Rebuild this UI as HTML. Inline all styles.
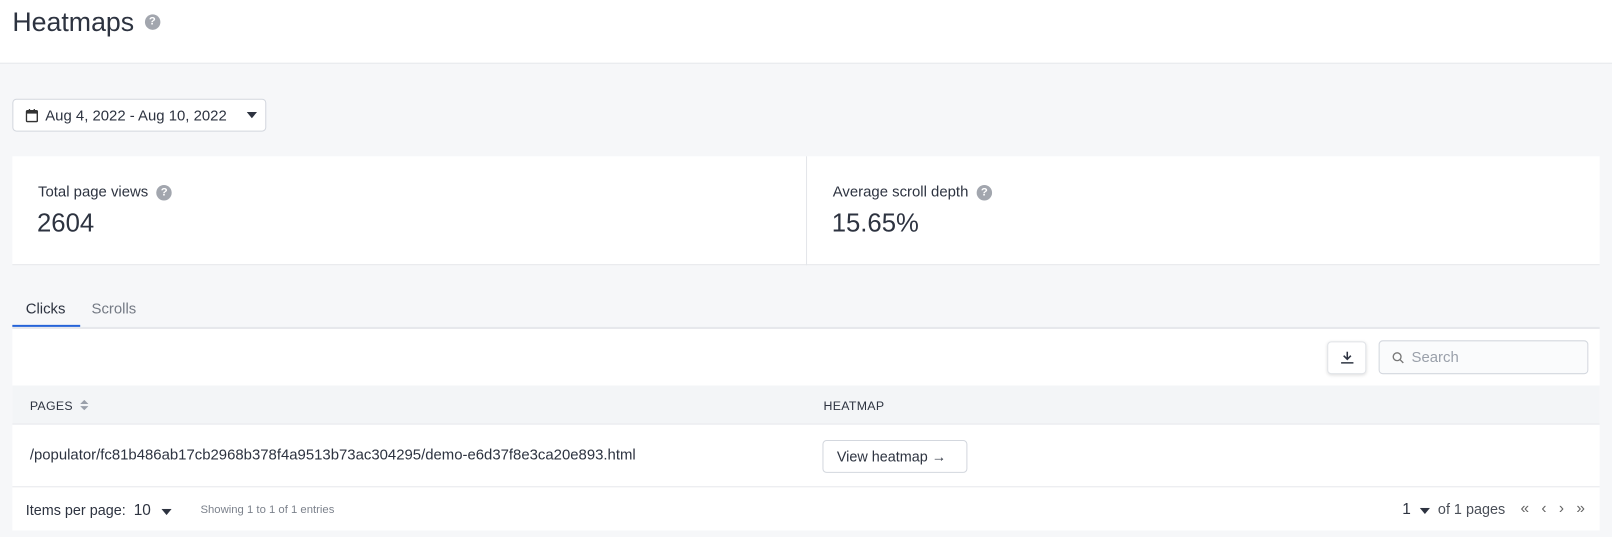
<!DOCTYPE html>
<html><head><style>
*{box-sizing:border-box;margin:0;padding:0}
body{width:1612px;height:536px;background:#f6f7f9;font-family:"Liberation Sans",sans-serif;color:#2d3340;position:relative;overflow:hidden}
#w{position:absolute;left:0;top:0;width:1568px;height:522px;transform:scale(1.02806);transform-origin:0 0}
.a{position:absolute}
.q{display:inline-block;width:15px;height:15px;border-radius:50%;background:#a2a6ae;color:#fff;font-size:11px;font-weight:bold;text-align:center;line-height:15px;vertical-align:middle}
</style></head><body><div id="w">
<div class="a" style="left:0;top:0;width:1568px;height:62px;background:#fff;border-bottom:1px solid #e4e6ea"></div>
<div class="a" style="left:12px;top:6px;font-size:26px;color:#2d3340">Heatmaps <span class="q" style="margin-left:3px;margin-top:-4px">?</span></div>
<div class="a" style="left:12px;top:96px;width:247px;height:32px;background:#fff;border:1px solid #d3d7de;border-radius:4px;font-size:14.5px;line-height:32px;padding-left:31px">
<svg class="a" style="left:12px;top:9px" width="12" height="13" viewBox="0 0 12 13"><rect x="0.7" y="1.7" width="10.6" height="10.6" rx="1" fill="none" stroke="#333" stroke-width="1.4"/><rect x="0.5" y="1.5" width="11" height="3" fill="#333"/><rect x="3" y="0" width="1.3" height="3" fill="#333"/><rect x="7.7" y="0" width="1.3" height="3" fill="#333"/></svg>
Aug 4, 2022 - Aug 10, 2022
<svg class="a" style="left:227px;top:12px" width="10" height="6"><path d="M0 0H10L5 6Z" fill="#2d3340"/></svg></div>
<div class="a" style="left:12px;top:152px;width:1544px;height:106px;background:#fff;border-bottom:1px solid #e4e6ea"></div>
<div class="a" style="left:784px;top:152px;width:1px;height:106px;background:#e4e6ea"></div>
<div class="a" style="left:37px;top:179px;font-size:14.5px">Total page views <span class="q" style="margin-left:4px">?</span></div>
<div class="a" style="left:36px;top:203px;font-size:25px">2604</div>
<div class="a" style="left:810px;top:179px;font-size:14.5px">Average scroll depth <span class="q" style="margin-left:4px">?</span></div>
<div class="a" style="left:809px;top:203px;font-size:25px">15.65%</div>
<div class="a" style="left:25px;top:293px;font-size:14.5px">Clicks</div>
<div class="a" style="left:89px;top:293px;font-size:14.5px;color:#747a84">Scrolls</div>
<div class="a" style="left:12px;top:316px;width:66px;height:2px;background:#2563d8"></div>
<div class="a" style="left:12px;top:318px;width:1544px;height:2px;background:#e6e8ec"></div>
<div class="a" style="left:12px;top:320px;width:1544px;height:196px;background:#fff"></div>
<div class="a" style="left:1291px;top:332px;width:38px;height:32px;border:1px solid #e1e4e8;border-radius:4px;box-shadow:0 1px 3px rgba(0,0,0,.12);background:#fff">
<svg class="a" style="left:12px;top:9px" width="13" height="12"><path d="M6.5 0V7M3 4L6.5 7.5L10 4M0.5 11H12.5" stroke="#2d3340" stroke-width="1.5" fill="none"/></svg></div>
<div class="a" style="left:1341px;top:331px;width:204px;height:33px;border:1px solid #d3d7de;border-radius:4px;background:#fafbfc;font-size:14.5px;color:#9aa0aa;line-height:33px;padding-left:31px">
<svg class="a" style="left:12px;top:10px" width="12" height="12"><circle cx="5" cy="5" r="3.8" stroke="#777" stroke-width="1.3" fill="none"/><path d="M8 8L11 11" stroke="#777" stroke-width="1.3"/></svg>Search</div>
<div class="a" style="left:12px;top:375px;width:1544px;height:38px;background:#f3f5f7;border-bottom:1px solid #e6e8ec"></div>
<div class="a" style="left:29px;top:388px;font-size:12px;letter-spacing:.3px">PAGES <svg width="8" height="10" style="margin-left:3px"><path d="M0 4L4 0L8 4ZM0 6L4 10L8 6Z" fill="#9aa0aa"/></svg></div>
<div class="a" style="left:801px;top:388px;font-size:12px;letter-spacing:.3px">HEATMAP</div>
<div class="a" style="left:29px;top:435px;font-size:14.5px">/populator/fc81b486ab17cb2968b378f4a9513b73ac304295/demo-e6d37f8e3ca20e893.html</div>
<div class="a" style="left:800px;top:428px;width:141px;height:32px;border:1px solid #d3d7de;border-radius:4px;font-size:14px;line-height:31px;padding-left:13px">View heatmap →</div>
<div class="a" style="left:12px;top:473px;width:1544px;height:1px;background:#e6e8ec"></div>
<div class="a" style="left:25px;top:488px;font-size:14px">Items per page: &nbsp;<span style="font-size:15px">10</span> <svg width="10" height="6" style="margin-left:6px"><path d="M0 0H10L5 6Z" fill="#2d3340"/></svg></div>
<div class="a" style="left:195px;top:490px;font-size:11px;color:#7c828c">Showing 1 to 1 of 1 entries</div>
<div class="a" style="left:1364px;top:487px;font-size:15px">1 <svg width="10" height="6" style="margin-left:4px"><path d="M0 0H10L5 6Z" fill="#2d3340"/></svg> <span style="font-size:14px;margin-left:4px;color:#4a4f58">of 1 pages</span></div>
<div class="a" style="left:1479px;top:486px;font-size:15px;color:#666;letter-spacing:12px">«‹›»</div>
</div></body></html>
